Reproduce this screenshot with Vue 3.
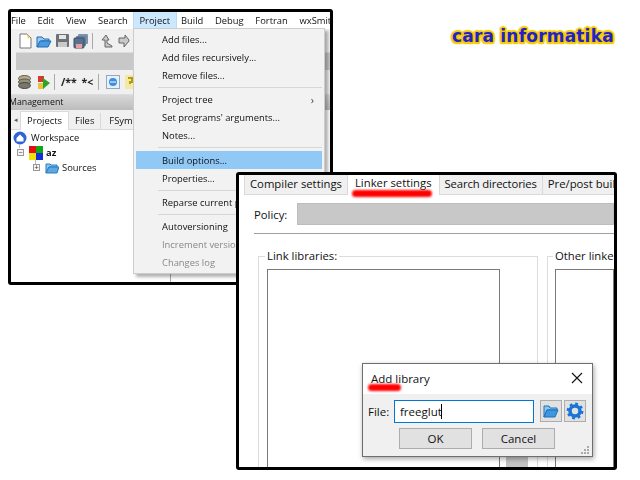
<script setup>
const menus = ['File', 'Edit', 'View', 'Search', 'Project', 'Build', 'Debug', 'Fortran', 'wxSmith']
const groups = [
  [{ t: 'Add files...' }, { t: 'Add files recursively...' }, { t: 'Remove files...' }],
  [{ t: 'Project tree', arrow: true }, { t: "Set programs' arguments..." }, { t: 'Notes...' }],
  [{ t: 'Build options...', hot: true }, { t: 'Properties...' }],
  [{ t: 'Reparse current project' }],
  [{ t: 'Autoversioning' }, { t: 'Increment version', off: true }, { t: 'Changes log', off: true }]
]
const tabs = ['Compiler settings', 'Linker settings', 'Search directories', 'Pre/post build steps']
</script>

<template>
  <div class="desk">
    <section class="win one">
      <nav class="menubar">
        <span v-for="m in menus" :key="m" class="mi" :class="{ open: m === 'Project' }">{{ m }}</span>
      </nav>
      <div class="tools">
        <svg width="15" height="16" viewBox="0 0 15 16"><path d="M2 1h7l4 4v10H2z" fill="#fff" stroke="#777"/><path d="M9 1l3 3-2 2z" fill="#f2c744"/></svg>
        <svg width="16" height="16" viewBox="0 0 16 16"><path d="M1 14V4h5l2 2h5v2H5z" fill="#9cc8ee" stroke="#1f6db5"/><path d="M1 14l3-6h11l-3 6z" fill="#4b9be0" stroke="#1f6db5"/></svg>
        <svg width="15" height="15" viewBox="0 0 15 15"><rect x="1" y="1" width="13" height="13" rx="1" fill="#6d7278"/><rect x="4" y="2" width="7" height="4" fill="#e6e6e6"/><rect x="3" y="9" width="9" height="5" fill="#c9c9c9"/></svg>
        <svg width="16" height="16" viewBox="0 0 16 16"><rect x="5" y="1" width="10" height="10" rx="1" fill="#7c93ad"/><rect x="3" y="3" width="10" height="10" rx="1" fill="#64809f"/><rect x="1" y="5" width="10" height="10" rx="1" fill="#57718f" stroke="#3b4f66"/><rect x="3" y="11" width="6" height="4" fill="#e7a0a0"/></svg>
        <i class="rule r1"></i>
        <svg width="14" height="14" viewBox="0 0 14 14"><path d="M2 6l4-5 3 5H7v3l5 3v1H5V6z" fill="#c9c9c9" stroke="#666"/></svg>
        <svg width="14" height="14" viewBox="0 0 14 14"><path d="M12 6L8 1v3H2v5h5v4l5-6z" fill="#c9c9c9" stroke="#666"/></svg>
      </div>
      <div class="band"></div>
      <div class="tools second">
        <svg width="15" height="14" viewBox="0 0 15 14"><ellipse cx="7.500" cy="3.500" rx="6" ry="3" fill="#b4ab8a" stroke="#5d5a4d"/><ellipse cx="7.500" cy="7" rx="6" ry="3" fill="#97917a" stroke="#5d5a4d"/><ellipse cx="7.500" cy="10.500" rx="6" ry="3" fill="#7a7668" stroke="#444"/></svg>
        <svg class="gap" width="14" height="15" viewBox="0 0 14 15"><rect x="1" y="1" width="6" height="6" fill="#d63a2f"/><rect x="1" y="8" width="6" height="6" fill="#e9c33a"/><path d="M6 3l7 5-7 6z" fill="#2ca52c"/></svg>
        <i class="rule r2"></i>
        <b class="cmt">/** *&lt;</b>
        <i class="rule r3"></i>
        <svg width="14" height="14" viewBox="0 0 14 14"><rect x=".5" y=".5" width="13" height="13" fill="#e8f1fa" stroke="#93a9bf"/><circle cx="7" cy="7" r="4" fill="#3b8ee0"/><path d="M4 7h6" stroke="#fff"/></svg>
        <svg class="gap" width="10" height="14" viewBox="0 0 10 14"><rect width="10" height="14" fill="#f2e9a2"/><path d="M3 3h4v4H5v2" fill="none" stroke="#b69a10" stroke-width="2"/></svg>
      </div>
      <div class="mgmt">Management</div>
      <div class="panel">
        <div class="side">
          <div class="tabs1">
            <span class="arrow">◂</span>
            <span class="t1 sel">Projects</span>
            <span class="t1">Files</span>
            <span class="t1">FSymbols</span>
          </div>
          <ul class="tree">
            <li class="l0">
              <svg width="14" height="14" viewBox="0 0 14 14"><circle cx="7" cy="7" r="6.500" fill="#2f63d8"/><path d="M3.500 7L7 3.500 10.500 7v3.500h-7z" fill="#fff"/></svg>
              Workspace
            </li>
            <li class="l1">
              <i class="box">−</i>
              <svg width="14" height="14" viewBox="0 0 14 14"><rect width="7" height="7" fill="#e01010"/><rect x="7" width="7" height="7" fill="#12a812"/><rect y="7" width="7" height="7" fill="#f2e20c"/><rect x="7" y="7" width="7" height="7" fill="#1030d8"/></svg>
              <b>az</b>
            </li>
            <li class="l2">
              <i class="box">+</i>
              <svg width="14" height="12" viewBox="0 0 14 12"><path d="M1 11V2h4l1 1h6v2H4z" fill="#8cc4ee" stroke="#2a7cc0"/><path d="M1 11l3-6h10l-2 6z" fill="#5ba8e4" stroke="#2a7cc0"/></svg>
              Sources
            </li>
          </ul>
        </div>
      </div>
    </section>

    <div class="menu">
      <template v-for="(g, i) in groups" :key="i">
        <hr v-if="i" />
        <div v-for="it in g" :key="it.t" class="row" :class="{ hot: it.hot, off: it.off }">
          <span>{{ it.t }}</span><em v-if="it.arrow">›</em>
        </div>
      </template>
    </div>

    <section class="win two">
      <div class="tabs2">
        <span v-for="t in tabs" :key="t" class="t2" :class="{ sel: t === 'Linker settings' }">{{ t }}</span>
      </div>
      <div class="body">
        <div class="policy"><label>Policy:</label><div class="combo"></div></div>
        <hr class="line" />
        <div class="groups">
          <fieldset class="grp left">
            <legend>Link libraries:</legend>
            <div class="list"></div>
            <i class="ghost"></i>
          </fieldset>
          <fieldset class="grp right">
            <legend>Other linker options:</legend>
            <div class="list"></div>
          </fieldset>
        </div>
      </div>
    </section>

    <i class="mark m1"></i>

    <section class="dialog">
      <header class="dhead">
        <span>Add library</span>
        <svg width="12" height="12" viewBox="0 0 12 12"><path d="M1 1l10 10M11 1L1 11" stroke="#111" stroke-width="1.100"/></svg>
      </header>
      <div class="dbody">
        <div class="frow">
          <label>File:</label>
          <div class="input">freeglut<i class="caret"></i></div>
          <button class="ib">
            <svg width="16" height="13" viewBox="0 0 16 13"><path d="M1 12V1h5l1 2h7v2H4z" fill="#8cc4ee" stroke="#1c70b8"/><path d="M1 12l3-7h11l-3 7z" fill="#3f97e2" stroke="#1c70b8"/></svg>
          </button>
          <button class="ib">
            <svg width="18" height="18" viewBox="0 0 18 18"><circle cx="9" cy="9" r="5" fill="none" stroke="#1a74d8" stroke-width="3.500"/><circle cx="9" cy="9" r="7.200" fill="none" stroke="#1a74d8" stroke-width="2.400" stroke-dasharray="2.800 2.850"/></svg>
          </button>
        </div>
        <div class="btns">
          <button class="b">OK</button>
          <button class="b">Cancel</button>
        </div>
        <svg class="grip" width="9" height="9" viewBox="0 0 9 9"><path d="M6 0h2v2H6zM3 3h2v2H3zM6 3h2v2H6zM0 6h2v2H0zM3 6h2v2H3zM6 6h2v2H6z" fill="#aaa"/></svg>
      </div>
    </section>
    <i class="mark m2"></i>

    <div class="brand">cara informatika</div>
  </div>
</template>

<style>
html, body { margin: 0; background: #fff; }
</style>

<style scoped>
.desk {
  position: relative;
  width: 640px;
  height: 480px;
  overflow: hidden;
  background: #fff;
  font-family: "Open Sans", "Noto Sans", sans-serif;
  color: #111;
}
.win {
  position: absolute;
  box-sizing: border-box;
  border: 3px solid #000;
  border-radius: 3px;
  overflow: hidden;
}
.one {
  left: 8px;
  top: 9px;
  width: 325px;
  height: 276px;
  background: #f0f0f0;
  font-size: 9.400px;
  display: flex;
  flex-direction: column;
}
.menubar {
  height: 17px;
  display: flex;
  align-items: center;
  background: #fff;
  flex: none;
}
.mi { margin-right: 11.700px; line-height: 17px; white-space: nowrap; }
.mi.open { background: #cce8ff; padding: 0 5.500px; margin: 0 5.500px 0 -5.500px; outline: 1px solid #b8dcf8; }
.tools {
  height: 23px;
  display: flex;
  align-items: center;
  gap: 3px;
  padding-left: 7px;
  flex: none;
}
.rule { width: 1px; height: 16px; background: #aaa; }
.r1 { margin: 0 4px 0 0; }
.r2 { margin: 0 3px 0 0; }
.r3 { margin: 0 4px 0 2px; }
.band { height: 17px; margin: 0 0 0 5px; background: #c8c8c8; border-top: 1px solid #ddd; flex: none; }
.second { height: 25px; padding-left: 6px; border-bottom: 1px solid #ddd; box-sizing: border-box; }
.gap { margin-left: 2px; }
.cmt { font-size: 10.500px; white-space: nowrap; color: #222; word-spacing: 2px; }
.mgmt {
  height: 15px;
  line-height: 15px;
  background: linear-gradient(#d8d8d8, #bcbcbc);
  font-size: 8.800px;
  margin-left: -2px;
  flex: none;
}
.panel { flex: 1; background: #fff; }
.side { position: relative; width: 160px; height: 100%; border-right: 1px solid #aaa; box-sizing: border-box; background: #fff; }
.tabs1 { display: flex; align-items: flex-end; height: 19px; background: #f0f0f0; border-bottom: 1px solid #d9d9d9; }
.arrow { width: 9px; font-size: 7px; color: #555; align-self: center; text-align: center; }
.t1 { padding: 0 6px; height: 16px; line-height: 16px; border-right: 1px solid #d9d9d9; white-space: nowrap; }
.t1:last-child { padding-left: 8px; }
.t1.sel { background: #fff; height: 18px; line-height: 18px; border: 1px solid #d9d9d9; border-bottom: 0; margin-bottom: -1px; padding: 0 6px; }
.tree { position: relative; list-style: none; margin: 0 0 0 2px; padding: 0; }
.tree::before { content: ""; position: absolute; left: 6px; top: 14px; width: 1px; height: 4px; background: #bbb; }
.tree::after { content: ""; position: absolute; left: 22px; top: 30px; width: 1px; height: 4px; background: #bbb; }
.tree li { display: flex; align-items: center; height: 15px; white-space: nowrap; }
.l0 svg { margin-right: 4px; }
.l1 { padding-left: 4px; }
.l2 { padding-left: 20px; }
.l1 svg, .l2 svg { margin: 0 3px 0 5px; }
.box {
  box-sizing: border-box;
  width: 7px;
  height: 7px;
  border: 1px solid #999;
  font: 7px/5px "Liberation Sans", sans-serif;
  text-align: center;
  color: #333;
  background: #f4f4f4;
}
.menu {
  position: absolute;
  left: 133px;
  top: 28px;
  width: 192px;
  height: 246px;
  box-sizing: border-box;
  background: #f2f2f2;
  border: 1px solid #ccc;
  box-shadow: 3px 3px 3px rgba(0, 0, 0, .3);
  padding: 1px 2px;
  font-size: 9.400px;
}
.one, .menu { filter: blur(.3px); }
.row {
  display: flex;
  justify-content: space-between;
  align-items: center;
  height: 18px;
  padding: 0 8px 0 26px;
  white-space: nowrap;
}
.row em { font-style: normal; font-size: 11px; color: #444; }
.row.hot { background: #90c8f6; }
.row.off { color: #888; }
.menu hr { border: 0; border-top: 1px solid #d7d7d7; margin: 2.500px 0 2.500px 22px; height: 0; }
.menu hr:nth-of-type(2) { margin-bottom: 3.500px; }
.two {
  left: 236px;
  top: 172px;
  width: 381px;
  height: 298px;
  background: #fff;
  font-size: 11.300px;
  display: flex;
  flex-direction: column;
}
.tabs2 {
  height: 20px;
  display: flex;
  align-items: flex-end;
  background: #fff;
  padding-left: 5px;
  flex: none;
}
.t2 {
  height: 20px;
  line-height: 17px;
  padding: 0 5px;
  background: #f0f0f0;
  border: 1px solid #d9d9d9;
  border-top: 0;
  white-space: nowrap;
  box-sizing: border-box;
  flex: none;
}
.t2.sel { background: #fff; line-height: 15px; border: 0; padding: 0 7px; }
.t2:nth-child(3) { letter-spacing: -.15px; }
.t2:last-child { margin-left: -1px; }
.body { flex: 1; padding: 8px 0 0 15px; min-width: 0; }
.policy { display: flex; align-items: center; gap: 10px; height: 22px; }
.combo { flex: 1; height: 22px; background: #c8c8c8; border: 1px solid #bdbdbd; box-sizing: border-box; }
.line { border: 0; border-top: 1px solid #a0a0a0; margin: 8px 0 0 0; height: 0; }
.groups { display: flex; margin-top: 15px; gap: 9px; }
.grp {
  position: relative;
  margin: 0;
  padding: 0 8px;
  border: 1px solid #dcdcdc;
  height: 232px;
  box-sizing: border-box;
  min-width: 0;
}
.grp.left { margin-left: 4px; width: 280px; flex: none; }
.grp.right { flex: 1; padding: 0 0 0 7px; border-right: 0; }
.grp legend { padding: 0 2px; margin-left: -2px; white-space: nowrap; line-height: 14px; }
.list { border: 1px solid #7a7a7a; height: 260px; margin-top: 6px; box-sizing: border-box; }
.left .list { width: 233px; }
.ghost { position: absolute; left: 247px; top: 186px; width: 22px; height: 18px; background: #c4c4c4; }
.mark {
  position: absolute;
  background: #f00;
  border-radius: 4px;
  filter: blur(1.200px);
}
.m1 { left: 352px; top: 190px; width: 80px; height: 7px; }
.m2 { left: 368px; top: 384px; width: 33px; height: 7px; }
.dialog {
  position: absolute;
  left: 362px;
  top: 363px;
  width: 231px;
  height: 94px;
  box-sizing: border-box;
  background: #f0f0f0;
  border: 1px solid #6e6e6e;
  box-shadow: 1px 2px 5px rgba(0, 0, 0, .35);
  font-size: 11.500px;
}
.dhead {
  height: 30px;
  background: #fff;
  display: flex;
  align-items: center;
  justify-content: space-between;
  padding: 0 9px 2px 8px;
  box-sizing: border-box;
}
.dbody { position: relative; padding: 5px 5px 0 5px; }
.frow { display: flex; align-items: center; height: 24px; }
.frow label { width: 26px; flex: none; }
.input {
  box-sizing: border-box;
  width: 140px;
  height: 23px;
  padding-left: 5px;
  background: #fff;
  border: 1px solid #0078d7;
  margin-right: 6px;
  flex: none;
  display: flex;
  align-items: center;
}
.caret { display: inline-block; width: 1px; height: 15px; background: #000; margin-left: -1px; }
.ib {
  box-sizing: border-box;
  width: 22px;
  height: 22px;
  margin: 0 2px 0 0;
  padding: 0;
  background: #e1e1e1;
  border: 1px solid #adadad;
  display: flex;
  align-items: center;
  justify-content: center;
  flex: none;
}
.btns { display: flex; margin: 5px 0 0 31px; gap: 10px; }
.b {
  box-sizing: border-box;
  width: 73px;
  height: 21px;
  padding: 0;
  background: #e1e1e1;
  border: 1px solid #adadad;
  font: inherit;
  color: #111;
}
.grip { position: absolute; right: 2px; top: 52px; }
.brand {
  position: absolute;
  left: 452px;
  top: 26px;
  font-family: "DejaVu Sans", sans-serif;
  font-size: 17px;
  font-weight: 700;
  color: #2222cc;
  white-space: nowrap;
  letter-spacing: .2px;
  text-shadow: 2px 0 1px #f7ca00, -2px 0 1px #f7ca00, 0 2px 1px #f7ca00, 0 -2px 1px #f7ca00, 1.500px 1.500px 1px #f7ca00, -1.500px 1.500px 1px #f7ca00, 1.500px -1.500px 1px #f7ca00, -1.500px -1.500px 1px #f7ca00;
}
</style>
